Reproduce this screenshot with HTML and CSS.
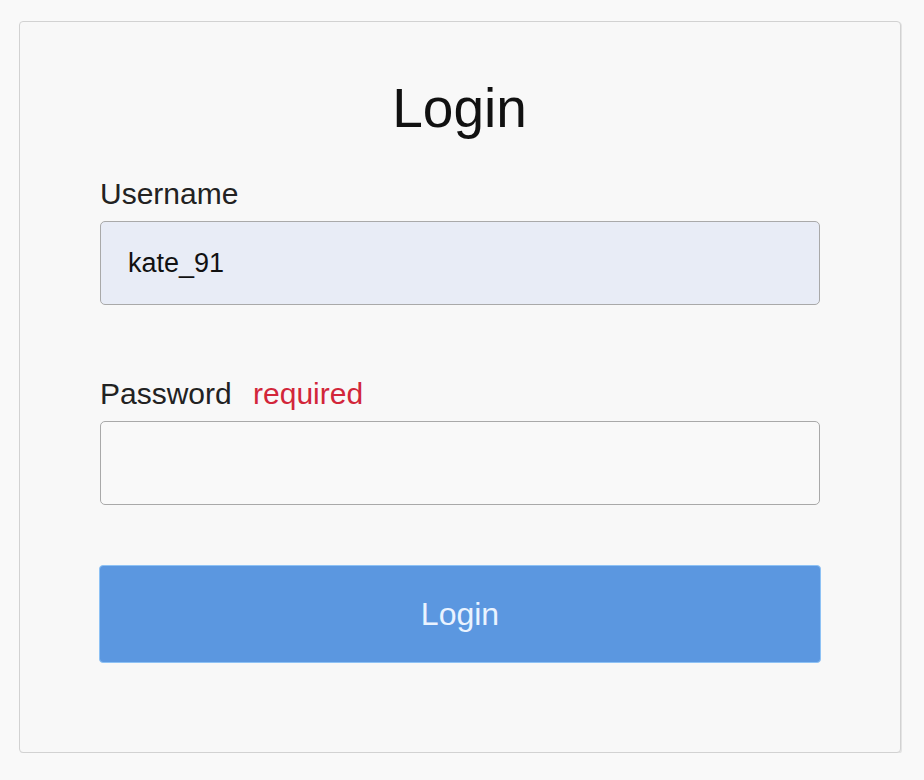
FILE: index.html
```html
<!DOCTYPE html>
<html lang="en">
<head>
<meta charset="utf-8">
<title>Login</title>
<link rel="stylesheet" href="styles.css">
</head>
<body>
<form class="card">
  <h1 class="title">Login</h1>
  <div class="field">
    <label class="label" for="username">Username</label>
    <input class="input input-filled" id="username" type="text" value="kate_91">
  </div>
  <div class="field field-password">
    <label class="label" for="password">Password <span class="error">required</span></label>
    <input class="input" id="password" type="password">
  </div>
  <button class="btn" type="button">Login</button>
</form>
</body>
</html>
```

FILE: styles.css
```css
* { box-sizing: border-box; }
html, body { margin: 0; padding: 0; }
body {
  background: #f9f9f9;
  font-family: "Liberation Sans", Arial, sans-serif;
  padding: 21px 0 0 19px;
}
.card {
  width: 882px;
  height: 732px;
  background: #f8f8f8;
  border: 1px solid #d2d2d2;
  border-radius: 4px;
  box-shadow: 1px 1px 0 #e4e4e4;
  padding: 54px 81px 0 80px;
  display: flex;
  flex-direction: column;
}
.title {
  margin: 0 0 37px 0;
  font-size: 55px;
  line-height: 64px;
  font-weight: normal;
  text-align: center;
  color: #111;
}
.field { display: flex; flex-direction: column; gap: 10px; }
.field-password { margin-top: 72px; }
.label {
  font-size: 30px;
  line-height: 34px;
  color: #222;
}
.error {
  color: #d2263a;
  margin-left: 13px;
}
.input {
  width: 720px;
  height: 84px;
  border: 1px solid #a9a9a9;
  border-radius: 5px;
  background: #f9f9f9;
  padding: 0 27px;
  font-family: "Liberation Sans", Arial, sans-serif;
  font-size: 27px;
  color: #111;
  outline: none;
}
.input-filled { background: #e8ecf6; }
.btn {
  margin: 60px -1px 0 -1px;
  width: 722px;
  height: 98px;
  background: #5b97e0;
  border: 1px solid #8ec2f5;
  border-radius: 4px;
  color: #eaf3ff;
  font-family: "Liberation Sans", Arial, sans-serif;
  font-size: 32px;
  padding: 0;
}
```
